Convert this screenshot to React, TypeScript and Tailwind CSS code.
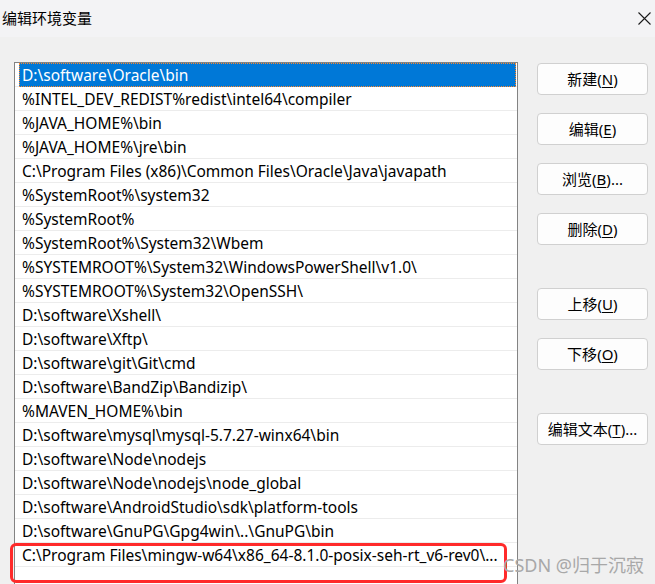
import React from "react";

const items: string[] = [
  "D:\\software\\Oracle\\bin",
  "%INTEL_DEV_REDIST%redist\\intel64\\compiler",
  "%JAVA_HOME%\\bin",
  "%JAVA_HOME%\\jre\\bin",
  "C:\\Program Files (x86)\\Common Files\\Oracle\\Java\\javapath",
  "%SystemRoot%\\system32",
  "%SystemRoot%",
  "%SystemRoot%\\System32\\Wbem",
  "%SYSTEMROOT%\\System32\\WindowsPowerShell\\v1.0\\",
  "%SYSTEMROOT%\\System32\\OpenSSH\\",
  "D:\\software\\Xshell\\",
  "D:\\software\\Xftp\\",
  "D:\\software\\git\\Git\\cmd",
  "D:\\software\\BandZip\\Bandizip\\",
  "%MAVEN_HOME%\\bin",
  "D:\\software\\mysql\\mysql-5.7.27-winx64\\bin",
  "D:\\software\\Node\\nodejs",
  "D:\\software\\Node\\nodejs\\node_global",
  "D:\\software\\AndroidStudio\\sdk\\platform-tools",
  "D:\\software\\GnuPG\\Gpg4win\\..\\GnuPG\\bin",
  "C:\\Program Files\\mingw-w64\\x86_64-8.1.0-posix-seh-rt_v6-rev0\\...",
];

const font = { fontFamily: '"Noto Sans", "Noto Sans CJK SC", sans-serif' };

function Btn({ label, u, suffix, className }: { label: string; u: string; suffix?: string; className?: string }) {
  return (
    <div
      className={`w-[111px] h-[32px] flex items-center justify-center rounded-[4px] border border-[#d0d0d0] bg-[#fdfdfd] text-[15px] text-black ${className ?? ""}`}
    >
      <span>
        {label}(<span className="underline underline-offset-2">{u}</span>){suffix}
      </span>
    </div>
  );
}

export default function App() {
  return (
    <div
      className="relative w-[655px] h-[584px] overflow-hidden bg-[#f0f0f0]"
      style={font}
    >
      <div className="h-[37px] bg-[#f3f3f5] flex items-center justify-between pl-[2px] pr-[4px]">
        <span className="text-[15px] text-black">编辑环境变量</span>
        <svg width="13" height="13" viewBox="0 0 13 13">
          <path d="M0.5 0.5 L12.5 12.5 M12.5 0.5 L0.5 12.5" stroke="#1a1a1a" strokeWidth="1.1" />
        </svg>
      </div>
      <div className="flex pl-[14px] pt-[25px]">
        <div className="w-[504px] h-[530px] border border-[#838383] bg-white">
          {items.map((t, i) => (
            <div key={i} className="h-[24px] border-b border-[#ececec] box-border">
              {i === 0 ? (
                <div className="ml-[4px] mr-[1px] h-[24px] bg-[#0078d7] border border-dotted border-[#ff8728] flex items-center pl-[2px] pt-[1px] text-white text-[15.5px] whitespace-nowrap">
                  {t}
                </div>
              ) : (
                <div className="h-[23px] flex items-center pl-[7px] pt-[2px] text-black text-[15.5px] whitespace-nowrap overflow-hidden">
                  {t}
                </div>
              )}
            </div>
          ))}
        </div>
        <div className="ml-[19px] pt-[1px] flex flex-col">
          <Btn label="新建" u="N" />
          <Btn label="编辑" u="E" className="mt-[18px]" />
          <Btn label="浏览" u="B" suffix="..." className="mt-[18px]" />
          <Btn label="删除" u="D" className="mt-[18px]" />
          <Btn label="上移" u="U" className="mt-[43px]" />
          <Btn label="下移" u="O" className="mt-[18px]" />
          <Btn label="编辑文本" u="T" suffix="..." className="mt-[43px]" />
        </div>
      </div>
      <div className="absolute left-[10px] top-[543px] w-[497px] h-[40px] border-[3px] border-[#ff2a2a] rounded-[6px]" />
      <div className="absolute left-[503px] top-[552px] text-[18px] text-[#a8a8a8] whitespace-nowrap">
        CSDN @归于沉寂
      </div>
    </div>
  );
}
